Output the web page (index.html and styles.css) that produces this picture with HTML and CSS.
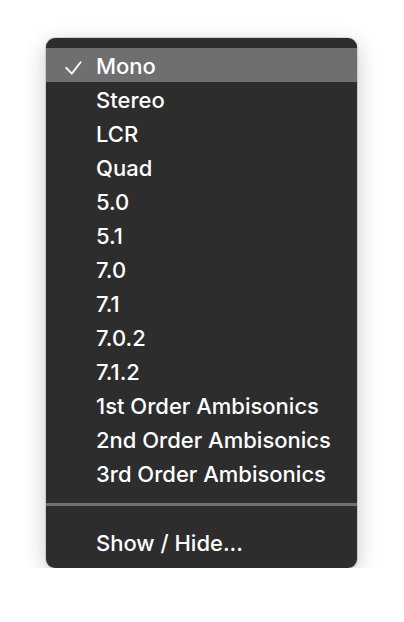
FILE: index.html
```html
<!DOCTYPE html>
<html lang="en">
<head>
    <meta charset="UTF-8">
    <meta name="viewport" content="width=device-width, initial-scale=1.0">
    <title>Channel Format</title>
    <link rel="stylesheet" href="styles.css">
</head>
<body>
    <div class="menu">
        <div class="item selected">
            <span class="check">
                <svg width="17" height="14" viewBox="0 0 17 14"><path d="M1.2 6.8 L6.8 12.6 L15.6 1.2" fill="none" stroke="#fff" stroke-width="1.8" stroke-linecap="round" stroke-linejoin="round"/></svg>
            </span>
            <span class="label">Mono</span>
        </div>
        <div class="item"><span class="check"></span><span class="label">Stereo</span></div>
        <div class="item"><span class="check"></span><span class="label">LCR</span></div>
        <div class="item"><span class="check"></span><span class="label">Quad</span></div>
        <div class="item"><span class="check"></span><span class="label">5.0</span></div>
        <div class="item"><span class="check"></span><span class="label">5.1</span></div>
        <div class="item"><span class="check"></span><span class="label">7.0</span></div>
        <div class="item"><span class="check"></span><span class="label">7.1</span></div>
        <div class="item"><span class="check"></span><span class="label">7.0.2</span></div>
        <div class="item"><span class="check"></span><span class="label">7.1.2</span></div>
        <div class="item"><span class="check"></span><span class="label">1st Order Ambisonics</span></div>
        <div class="item"><span class="check"></span><span class="label">2nd Order Ambisonics</span></div>
        <div class="item"><span class="check"></span><span class="label">3rd Order Ambisonics</span></div>
        <div class="separator"></div>
        <div class="item"><span class="check"></span><span class="label">Show / Hide...</span></div>
    </div>
</body>
</html>
```

FILE: styles.css
```css
body {
    margin: 0;
    background-color: #ffffff;
    font-family: "Inter", "Liberation Sans", sans-serif;
}
.menu {
    width: 311px;
    margin: 38px 0 0 46px;
    padding: 10px 0 9px;
    background-color: #2d2d2d;
    border-radius: 9px;
    box-shadow: 0 6px 22px rgba(0, 0, 0, 0.22), 0 0 0 1px rgba(0, 0, 0, 0.12);
}
.item {
    display: flex;
    align-items: center;
    height: 34px;
    color: #ffffff;
    font-size: 22px;
    font-weight: 500;
}
.label {
    padding-top: 2px;
}
.item.selected {
    background-color: #6f6f6f;
}
.check {
    width: 31px;
    padding-left: 19px;
    display: flex;
    align-items: center;
}
.check svg {
    margin-top: 5px;
}
.separator {
    height: 3px;
    margin: 13px 0 19px;
    background-color: #707070;
}
```
